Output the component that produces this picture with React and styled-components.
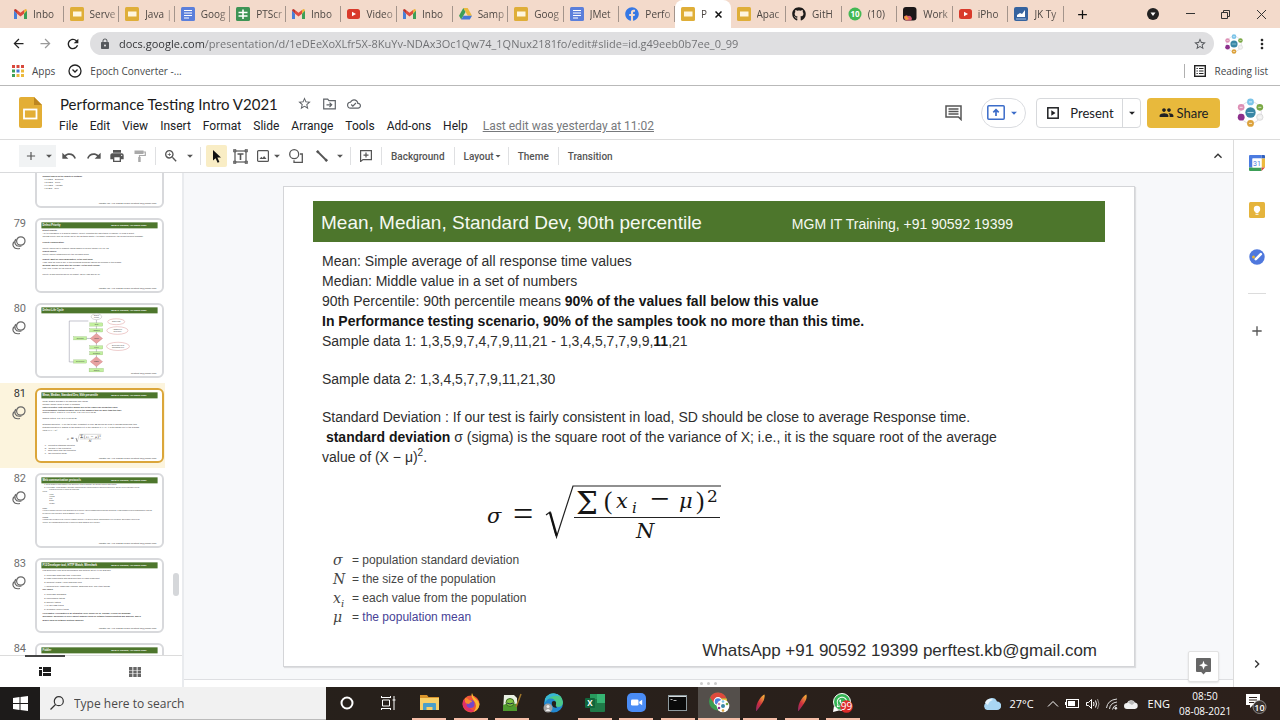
import React, { useLayoutEffect, useRef } from "react";
import styled, { createGlobalStyle, css } from "styled-components";
import {
  MdAdd,
  MdArrowBack,
  MdArrowDropDown,
  MdArrowForward,
  MdChevronRight,
  MdKeyboardArrowUp,
  MdLock,
  MdMoreVert,
  MdOutlineCloudDone,
  MdPeople,
  MdPrint,
  MdRedo,
  MdRefresh,
  MdStarBorder,
  MdUndo,
  MdZoomIn,
} from "react-icons/md";
import { FaFacebook, FaGithub, FaWhatsapp } from "react-icons/fa";

const GlobalStyle = createGlobalStyle`
  * {
    box-sizing: border-box;
  }
  body {
    margin: 0;
    background: white;
    font-family: Roboto, "Liberation Sans", sans-serif;
    color: #202124;
  }
  button {
    border: none;
    background: none;
    padding: 0;
    margin: 0;
    font: inherit;
    color: inherit;
    display: flex;
    align-items: center;
    justify-content: center;
  }
  a {
    color: inherit;
  }
  svg {
    display: block;
    flex: none;
  }
`;

const Page = styled.div`
  display: flex;
  flex-direction: column;
  height: 100vh;
  overflow: hidden;
`;

/* browser chrome */

const TabStrip = styled.div`
  display: flex;
  height: 28px;
  background: #f3dacb;
  padding-left: 8px;
`;

const TabList = styled.div`
  display: flex;
  flex: 1;
  min-width: 0;
`;

const Tab = styled.button`
  flex: 1 1 0;
  min-width: 0;
  justify-content: flex-start;
  gap: 6px;
  padding: 0 1px 0 6px;
  font: 10px "Open Sans", sans-serif;
  color: #4c4642;
  background-image: linear-gradient(#a3948b, #a3948b);
  background-size: 1px 16px;
  background-position: right 6px;
  background-repeat: no-repeat;
  ${(props) =>
    props.$active &&
    css`
      background: white;
      border-radius: 8px 8px 0 0;

      svg:last-child {
        margin-right: 8px;
      }
    `}
`;

const TabLabel = styled.span`
  flex: 1;
  min-width: 0;
  text-align: left;
  white-space: nowrap;
  mask-image: linear-gradient(to right, black 60%, rgba(0, 0, 0, 0.3));
`;

const WindowButtons = styled.div`
  display: flex;
  flex: none;
  align-items: center;
  justify-content: space-between;
  width: 216px;
  padding: 0 14px 0 11px;
`;

const NewTab = styled.button`
  margin-right: 30px;
`;

const AddressRow = styled.div`
  display: flex;
  align-items: center;
  height: 31px;
  padding: 0 11px;
  gap: 10px;
`;

const NavGroup = styled.div`
  display: flex;
  gap: 12px;
`;

const NavButton = styled.button`
  width: 15px;
  color: ${(props) => (props.$dim ? "#9a9a9a" : "#222")};
`;

const UrlBox = styled.label`
  display: flex;
  align-items: center;
  flex: 1;
  height: 23px;
  padding: 0 7px 0 9px;
  gap: 8px;
  border-radius: 12px;
  background: #dfdfe1;
  color: #55585c;
`;

const UrlInput = styled.input`
  flex: 1;
  border: none;
  outline: none;
  padding: 0;
  font: 11px "Open Sans", sans-serif;
  color: transparent;
  background: linear-gradient(to right, #2f3033 86px, #6d6e71 86px);
  background-clip: text;
`;

const Bookmarks = styled.nav`
  display: flex;
  align-items: center;
  height: 27px;
  padding: 0 12px 3px;
  gap: 13px;
  border-bottom: 1px solid #b9b9b9;
  font: 10px "Open Sans", sans-serif;
  color: #45474a;
`;

const Bookmark = styled.a`
  display: flex;
  align-items: center;
  gap: 8px;
  text-decoration: none;
`;

const ReadingList = styled.button`
  margin-left: auto;
  padding-left: 9px;
  gap: 8px;
  border-left: 1px solid #b0b0b0;
`;

/* document header */

const DocHeader = styled.header`
  display: flex;
  align-items: center;
  height: 54px;
  padding: 0 15px 0 19px;
  border-bottom: 1px solid #dcdcdc;
`;

const DocInfo = styled.div`
  flex: 1;
  margin-left: 17px;
  padding-top: 5px;
`;

const TitleRow = styled.div`
  display: flex;
  align-items: center;
  height: 22px;
  gap: 11px;
  color: #5f6368;
`;

const DocTitle = styled.h1`
  margin: 0 8px 0 1px;
  font: 15px Lato, sans-serif;
  color: #1b1b1b;
`;

const MenuRow = styled.nav`
  display: flex;
  align-items: center;
  height: 23px;
  gap: 12px;
  font-size: 12px;
`;

const LastEdit = styled.a`
  margin-left: 3px;
  color: #77797c;
`;

const HeaderActions = styled.div`
  display: flex;
  align-items: center;
`;

const PillButton = styled.button`
  width: 45px;
  height: 30px;
  margin: 0 10px 0 19px;
  gap: 2px;
  border: 1px solid #dadce0;
  border-radius: 15px;
  color: #3b6cc9;
`;

const Split = styled.div`
  display: flex;
  height: 30px;
  margin-right: 6px;
  border: 1px solid #d7d9dc;
  border-radius: 4px;
  font: 13px Lato, sans-serif;
`;

const PresentButton = styled.button`
  width: 86px;
  padding-left: 2px;
  gap: 11px;
  border-right: 1px solid #d7d9dc;
`;

const PresentMenu = styled.button`
  width: 17px;
`;

const ShareButton = styled.button`
  width: 73px;
  height: 30px;
  margin-right: 16px;
  gap: 3px;
  border-radius: 4px;
  background: #e8b93c;
  font: 13px Lato, sans-serif;
`;

/* workspace */

const Workspace = styled.div`
  display: flex;
  flex: 1;
  min-height: 0;
`;

const Editor = styled.div`
  display: flex;
  flex-direction: column;
  flex: 1;
`;

const Toolbar = styled.div`
  display: flex;
  align-items: center;
  height: 33px;
  padding: 0 3px 0 19px;
  border-bottom: 1px solid #d9dadc;
  color: #555;
`;

const Tool = styled.button`
  width: ${(props) => props.$w || 24}px;
  height: 22px;
  opacity: ${(props) => (props.$dim ? 0.5 : 1)};
`;

const NewSlide = styled.div`
  display: flex;
  background: #f1f3f4;
`;

const SelectTool = styled(Tool)`
  width: 21px;
  margin: 0 2px;
  border-radius: 2px;
  background: #f9edc5;
`;

const ArrowTool = styled(Tool)`
  width: 14px;
  margin-left: -${(props) => props.$overlap || 0}px;
`;

const TextTool = styled(Tool)`
  width: auto;
  padding: 0 6px;
  font-size: 10px;
  font-weight: 500;

  svg {
    margin: 0 -5px 0 -2px;
  }
`;

const Divider = styled.span`
  width: 1px;
  height: 18px;
  margin: 0 3px;
  background: #dfe0e2;
`;

const CollapseButton = styled(Tool)`
  margin-left: auto;
  color: #333;
`;

const Panes = styled.div`
  display: flex;
  flex: 1;
  min-height: 0;
`;

const Filmstrip = styled.aside`
  position: relative;
  display: flex;
  flex-direction: column;
  width: 184px;
  border-right: 2px solid #e9ebee;
`;

const ThumbList = styled.ol`
  flex: 1;
  min-height: 0;
  margin: 0;
  padding: 0;
  overflow: hidden;
  list-style: none;
`;

const ThumbItem = styled.li`
  display: flex;
  height: 85px;
  padding: 5px 0;
  background: ${(props) => (props.$active ? "#fcf4dd" : "white")};
  width: ${(props) => (props.$active ? "165px" : "auto")};
`;

const ThumbSide = styled.div`
  display: flex;
  flex-direction: column;
  align-items: flex-end;
  width: 26px;
  margin-right: 9px;
  gap: 6px;
  font-size: 11px;
  line-height: 12px;
  color: ${(props) => (props.$active ? "#333" : "#6e6e6e")};
`;

const Thumb = styled.button`
  width: 129px;
  height: 75px;
  border: 2px solid ${(props) => (props.$active ? "#dba63a" : "#d8d9dc")};
  border-radius: 6px;
  background: white;
  overflow: hidden;
`;

const ScrollHandle = styled.span`
  position: absolute;
  right: 3px;
  top: 400px;
  width: 6px;
  height: 23px;
  border-radius: 3px;
  background: #d5d7da;
`;

const ViewSwitch = styled.div`
  display: flex;
  align-items: stretch;
  height: 32px;
  padding-right: 2px;
  border-top: 1px solid #dcdcdc;
`;

const ViewButton = styled.button`
  flex: 1;
  color: #222;
`;

const ActiveView = styled(ViewButton)`
  margin-top: -1px;
  background: linear-gradient(#444, #444) center top / 40px 2px no-repeat;
`;

const CanvasPane = styled.main`
  position: relative;
  display: flex;
  flex-direction: column;
  flex: 1;
`;

const Canvas = styled.div`
  flex: 1;
  padding: 13px 98px 0 99px;
  background: #f7f8fa;
  border-bottom: 1px solid #dedfe2;
`;

const Notes = styled.div`
  display: flex;
  align-items: center;
  justify-content: center;
  gap: 4px;
  height: 7px;
`;

const Dot = styled.i`
  width: 3px;
  height: 3px;
  border-radius: 50%;
  background: #ccc;
`;

const ExploreButton = styled.button`
  position: absolute;
  right: 14px;
  bottom: 5px;
  width: 31px;
  height: 31px;
  border: 1px solid #e2e2e2;
  border-radius: 2px;
  background: white;
  box-shadow: 0 1px 2px rgba(0, 0, 0, 0.12);
`;

const SidePanel = styled.aside`
  display: flex;
  flex-direction: column;
  align-items: center;
  width: 47px;
  padding: 15px 0;
  border-left: 1px solid #dcdcdc;
`;

const SideButton = styled.button`
  height: 16px;
  margin-bottom: 31px;
`;

const SideRule = styled.span`
  width: 18px;
  height: 1px;
  margin: -3px 0 29px;
  background: #dcdcdc;
`;

const SideToggle = styled.button`
  margin-top: auto;
`;

/* slide */

const Slide = styled.article`
  display: flex;
  flex-direction: column;
  height: 481px;
  padding: 14px 29px 0;
  border: 1px solid #d4d5d8;
  background: white;
  box-shadow: 1px 1px 1px rgba(0, 0, 0, 0.1);
  font-family: "Liberation Sans", Arial, sans-serif;
  color: #2e2e2e;
`;

const SlideHead = styled.div`
  display: flex;
  align-items: center;
  justify-content: space-between;
  height: 41px;
  padding: 2px 92px 0 8px;
  background: #4d762c;
  color: #f6f9f2;
`;

const SlideTitle = styled.h2`
  margin: 0;
  font-size: 19px;
  font-weight: normal;
`;

const SlideContact = styled.span`
  padding-top: 3px;
  font-size: 14px;
`;

const SlideText = styled.div`
  padding: 9px 0 0 9px;
  font-size: 14px;
  line-height: 20px;
  white-space: nowrap;
`;

const Paragraph = styled.p`
  margin: 0 0 18px;

  b {
    color: #161616;
  }
  sup {
    font-size: 10px;
    line-height: 0;
  }
`;

const Formula = styled.svg`
  margin: -3px 0 0 170px;
`;

const Legend = styled.dl`
  display: grid;
  grid-template-columns: 19px auto;
  justify-content: start;
  margin: 7px 0 0 20px;
  font-size: 12px;
  line-height: 19px;
  color: #444;
`;

const Symbol = styled.dt`
  font: italic 14px "DejaVu Serif", serif;
  line-height: 19px;

  sub {
    font-size: 10px;
    line-height: 0;
  }
`;

const Meaning = styled.dd`
  margin: 0;

  a {
    color: #473f96;
    text-decoration: none;
  }
`;

const SlideFooter = styled.p`
  margin: auto 8px 5px;
  text-align: right;
  font-size: 17px;
  line-height: 20px;
`;

/* taskbar */

const Taskbar = styled.footer`
  display: flex;
  height: 33px;
  background: linear-gradient(to right, #25201b, #2c201b);
  color: white;
  font-family: "Open Sans", sans-serif;
`;

const StartButton = styled.button`
  width: 40px;
  background: #1d1b1a;
`;

const SearchBox = styled.label`
  display: flex;
  align-items: center;
  width: 286px;
  padding-left: 10px;
  gap: 10px;
  background: #f1f1f1;
  border-bottom: 1px solid #bbb;
`;

const SearchInput = styled.input`
  flex: 1;
  min-width: 0;
  border: none;
  outline: none;
  padding: 0;
  background: none;
  font: 12px "Open Sans", sans-serif;

  &::placeholder {
    color: #4a4a4a;
    opacity: 1;
  }
`;

const TaskIcons = styled.div`
  display: flex;
  width: 42%;
`;

const TaskButton = styled.button`
  flex: 1;
  border-bottom: 2px solid transparent;
  ${(props) =>
    props.$open &&
    css`
      background: linear-gradient(#f5bea8, #f5bea8) center bottom / 34px 2px no-repeat border-box;
    `}
  ${(props) =>
    props.$active &&
    css`
      background: #544f4b;
      border-color: #f5bea8;
    `}
`;

const Tray = styled.div`
  display: flex;
  align-items: center;
  margin-left: auto;
  font-size: 11px;
`;

const Weather = styled.button`
  gap: 8px;
  margin-right: 13px;
`;

const TrayIcons = styled.div`
  display: flex;
  align-items: center;
  gap: 6px;
  margin-right: 10px;
`;

const Clock = styled.time`
  width: 52px;
  margin: 0 15px 0 9px;
  font-size: 10px;
  line-height: 15px;
  text-align: center;
  white-space: nowrap;
`;

const Notice = styled.button`
  margin-right: 13px;
`;

const SlidesIcon = () => (
  <svg width="14" height="14" viewBox="0 0 14 14">
    <rect width="14" height="14" rx="1.5" fill="#dfae38" />
    <rect x="3" y="4.5" width="8.5" height="5" fill="#fff6df" />
  </svg>
);

const DocsIcon = () => (
  <svg width="14" height="14" viewBox="0 0 14 14">
    <rect width="14" height="14" rx="1.5" fill="#5b7fdb" />
    <path d="M3 3.5h8M3 6h8M3 8.5h8M3 11h5" stroke="white" strokeWidth="1.2" />
  </svg>
);

const SheetsIcon = () => (
  <svg width="14" height="14" viewBox="0 0 14 14">
    <rect width="14" height="14" rx="1.5" fill="#3d9455" />
    <path d="M2.5 5.5h9M7 2.5v9.5M2.5 9h9" stroke="white" strokeWidth="1.6" />
  </svg>
);

const GmailIcon = () => (
  <svg width="13" height="10" viewBox="0 0 13 10">
    <path d="M0 1.5v8.5h3V4.5z" fill="#4880d8" />
    <path d="M13 1.5v8.5h-3V4.5z" fill="#3c9f57" />
    <path d="M0 1.5l3 3V1L1.5 0Q0 0 0 1.5z" fill="#b9342c" />
    <path d="M13 1.5l-3 3V1l1.5-1Q13 0 13 1.5z" fill="#edb23a" />
    <path d="M3 1l3.5 2.7L10 1v3.7L6.5 7.5 3 4.7z" fill="#de4c3f" />
  </svg>
);

const YoutubeIcon = () => (
  <svg width="13" height="10" viewBox="0 0 13 10">
    <rect width="13" height="10" rx="2.5" fill="#d93a2b" />
    <path d="M5 2.8v4.4L9 5z" fill="white" />
  </svg>
);

const DriveIcon = () => (
  <svg width="13" height="12" viewBox="0 0 13 12">
    <path d="M4.3 0h4.4L13 7.7H8.8z" fill="#ecb93c" />
    <path d="M4.3 0L0 7.7 2.2 11.5 6.5 4z" fill="#3c9f57" />
    <path d="M4.5 7.7H13l-2.2 3.8H2.2z" fill="#4478d8" />
  </svg>
);

const WhatsappTabIcon = () => (
  <svg width="14" height="14" viewBox="0 0 14 14">
    <circle cx="7" cy="7" r="6.5" fill="#43b854" />
    <text x="7" y="10" fill="white" fontSize="8" fontWeight="700" textAnchor="middle">10</text>
  </svg>
);

const WorkIcon = () => (
  <svg width="14" height="14" viewBox="0 0 14 14">
    <rect width="13.5" height="13.5" rx="3" fill="#1b1718" />
    <path d="M1 10q2-3 4-1 3-1 4 3l-1 1.5H4q-3 0-3-3.5z" fill="#d85a6e" />
    <path d="M1 9.5l2.5-.5L6 12l-3 1z" fill="#f0a03a" />
  </svg>
);

const TypingIcon = () => (
  <svg width="14" height="14" viewBox="0 0 14 14">
    <rect width="14" height="14" rx="2" fill="#35639f" />
    <path d="M3 10V8l3-2 2 1 3-4v7z" fill="white" />
    <path d="M2 12h10" stroke="#9dbbe0" />
  </svg>
);

const TABS = [
  { label: "Inbo", icon: <GmailIcon /> },
  { label: "Serve", icon: <SlidesIcon /> },
  { label: "Java |", icon: <SlidesIcon /> },
  { label: "Goog", icon: <DocsIcon /> },
  { label: "PTScr", icon: <SheetsIcon /> },
  { label: "Inbo", icon: <GmailIcon /> },
  { label: "Video", icon: <YoutubeIcon /> },
  { label: "Inbo", icon: <GmailIcon /> },
  { label: "Samp", icon: <DriveIcon /> },
  { label: "Goog", icon: <SlidesIcon /> },
  { label: "JMet", icon: <DocsIcon /> },
  { label: "Perfo", icon: <FaFacebook size={14} color="#3578e5" /> },
  { label: "P", icon: <SlidesIcon />, active: true },
  { label: "Apac", icon: <SlidesIcon /> },
  { label: "GitH", icon: <FaGithub size={14} color="#1d1b1a" /> },
  { label: "(10)", icon: <WhatsappTabIcon /> },
  { label: "Work", icon: <WorkIcon /> },
  { label: "iPho", icon: <YoutubeIcon /> },
  { label: "JK Ty", icon: <TypingIcon /> },
];

const TabClose = () => (
  <svg width="7" height="7" viewBox="0 0 7 7">
    <path d="M.5 .5l6 6M6.5 .5l-6 6" stroke="#111" strokeWidth="1.5" />
  </svg>
);

const Avatar = ({ size }) => (
  <svg width={size} height={size} viewBox="0 0 28 28">
    <circle cx="14" cy="14" r="10.5" fill="none" stroke="#d9d3e0" strokeWidth="0.8" />
    <circle cx="14" cy="14" r="5" fill="#3987a6" />
    <path d="M11 14h6" stroke="#a8d3e2" />
    <circle cx="14" cy="3.8" r="3.3" fill="#7cc4e8" />
    <circle cx="23" cy="9" r="3.2" fill="#7aa845" />
    <circle cx="23" cy="18.5" r="3.1" fill="#eeeeee" stroke="#cfcfcf" strokeWidth="0.6" />
    <circle cx="14" cy="24.5" r="3.3" fill="#dca23c" />
    <circle cx="5" cy="18.5" r="3.3" fill="#8c2f8c" />
    <circle cx="5" cy="9" r="3.2" fill="#dd8fb5" />
    <path d="M3.5 9h3M12.5 3.8h3M21.5 9h3M21.5 18.5h3M12.5 24.5h3" stroke="white" strokeWidth="0.7" />
  </svg>
);

const AppsGrid = () => (
  <svg width="12" height="12" viewBox="0 0 12 12">
    {["#d8483c", "#d8483c", "#d8483c", "#3c9f57", "#4478d8", "#ecb93c", "#3c9f57", "#ecb93c", "#ecb93c"].map(
      (fill, i) => (
        <rect key={i} x={(i % 3) * 4.5} y={Math.floor(i / 3) * 4.5} width="3" height="3" fill={fill} />
      )
    )}
  </svg>
);

const EpochIcon = () => (
  <svg width="14" height="14" viewBox="0 0 14 14" fill="none" stroke="#222" strokeWidth="1.3">
    <circle cx="7" cy="7" r="6" />
    <path d="M4.5 5.5L7 8l2.5-2.5" />
  </svg>
);

const ReadingIcon = () => (
  <svg width="12" height="12" viewBox="0 0 12 12" fill="none" stroke="#222" strokeWidth="1.4">
    <rect x="0.7" y="0.7" width="10.6" height="10.6" />
    <path d="M2.5 3.5h1.3M5 3.5h4.5M2.5 6h1.3M5 6h4.5M2.5 8.5h1.3M5 8.5h4.5" strokeWidth="1.1" />
  </svg>
);

const SlidesLogo = () => (
  <svg width="23" height="31" viewBox="0 0 23 31">
    <path d="M2 0h13l8 8v21q0 2-2 2H2q-2 0-2-2V2q0-2 2-2z" fill="#e3ae35" />
    <path d="M15 0l8 8h-8z" fill="#bd8620" />
    <rect x="5" y="12.5" width="12.5" height="9" fill="none" stroke="white" strokeWidth="1.8" />
  </svg>
);

const FolderMoveIcon = () => (
  <svg width="13" height="12" viewBox="0 0 13 12" fill="none" stroke="#5f6368" strokeWidth="1.2">
    <path d="M0.7 10.8V1.2h4l1.2 1.5h6.4v8.1zM3.5 6.8h5M6.5 4.6l2.2 2.2-2.2 2.2" />
  </svg>
);

const CommentIcon = () => (
  <svg width="17" height="16" viewBox="0 0 17 16" fill="none" stroke="#555" strokeWidth="1.5">
    <path d="M1 1h15v13.5L13.5 12H1z" />
    <path d="M3.5 4h10M3.5 6.5h10M3.5 9h10" strokeWidth="1.4" />
  </svg>
);

const UploadBoxIcon = () => (
  <svg width="18" height="15" viewBox="0 0 18 15" fill="none" stroke="#3b6cc9" strokeWidth="1.5">
    <rect x="0.8" y="0.8" width="16.4" height="13.4" rx="1" />
    <path d="M9 11V5M6.3 7.3L9 4.6l2.7 2.7" strokeWidth="1.7" />
  </svg>
);

const PlayBoxIcon = () => (
  <svg width="12" height="12" viewBox="0 0 12 12">
    <rect x="0.8" y="0.8" width="10.4" height="10.4" fill="none" stroke="#202124" strokeWidth="1.5" />
    <path d="M4.3 3.3v5.4L8.5 6z" fill="#202124" />
  </svg>
);

const PaintIcon = () => (
  <svg width="12" height="12" viewBox="0 0 12 12">
    <rect x="0.5" y="0.5" width="9" height="3.5" fill="#555" />
    <path d="M9 2h2.3v3.5H5.5V7" fill="none" stroke="#555" strokeWidth="1.2" />
    <rect x="4.2" y="7" width="2.5" height="5" fill="#555" />
  </svg>
);

const CursorIcon = () => (
  <svg width="10" height="13" viewBox="0 0 10 13">
    <path d="M1 0v10.5l2.6-2.3 2 4.6 1.8-.8-2-4.5H9z" fill="#111" />
  </svg>
);

const TextBoxIcon = () => (
  <svg width="15" height="15" viewBox="0 0 15 15" fill="none" stroke="#555">
    <rect x="2" y="2" width="11" height="11" strokeWidth="1.2" />
    <path d="M4.5 5h6M7.5 5v6" strokeWidth="1.6" />
    <path d="M.5 .5h2.5v2.5H.5zM12 .5h2.5v2.5H12zM.5 12h2.5v2.5H.5zM12 12h2.5v2.5H12z" fill="#777" strokeWidth="0.6" />
  </svg>
);

const ImageIcon = () => (
  <svg width="12" height="12" viewBox="0 0 12 12">
    <rect x="0.6" y="0.6" width="10.8" height="10.8" rx="1" fill="none" stroke="#555" strokeWidth="1.2" />
    <path d="M2.5 9l1.8-2.3 1.3 1.4 1.5-2L9.5 9z" fill="#555" />
  </svg>
);

const ShapeIcon = () => (
  <svg width="14" height="14" viewBox="0 0 14 14" fill="none" stroke="#555" strokeWidth="1.3">
    <circle cx="5.2" cy="5.2" r="4.5" />
    <path d="M11 5h2.3v8.3H5V11.3" />
  </svg>
);

const LineIcon = () => (
  <svg width="12" height="12" viewBox="0 0 12 12" stroke="#555" fill="#555">
    <path d="M1.5 1.5l9 9" strokeWidth="1.8" />
    <circle cx="1.7" cy="1.7" r="1" />
    <circle cx="10.3" cy="10.3" r="1" />
  </svg>
);

const AddCommentIcon = () => (
  <svg width="12" height="12" viewBox="0 0 12 12" fill="none" stroke="#555" strokeWidth="1.2">
    <path d="M.6 .6h10.8v9H3L.6 11.5zM6 2.6v5M3.5 5.1h5" />
  </svg>
);

const TransitionIcon = () => (
  <svg width="14" height="14" viewBox="0 0 14 14" fill="none" stroke="#666" strokeWidth="1.2">
    <circle cx="8.8" cy="5" r="4.2" />
    <path d="M4.1 3.3Q2 5 3.3 8t6.2 2" />
    <path d="M2.5 5.5Q0 7.5 1.5 10.5t6.5 2" />
  </svg>
);

const FilmViewIcon = () => (
  <svg width="12" height="9" viewBox="0 0 12 9" fill="#1c1c1c">
    <path d="M0 0h3v2H0zM0 3h3v6H0zM4 0h8v5H4zM4 6h8v3H4z" />
  </svg>
);

const GridViewIcon = () => (
  <svg width="12" height="10" viewBox="0 0 12 10" fill="#666">
    <path d="M0 0h3.4v3H0zM4.3 0h3.4v3H4.3zM8.6 0H12v3H8.6zM0 3.5h3.4v3H0zM4.3 3.5h3.4v3H4.3zM8.6 3.5H12v3H8.6zM0 7h3.4v3H0zM4.3 7h3.4v3H4.3zM8.6 7H12v3H8.6z" />
  </svg>
);

const ExploreIcon = () => (
  <svg width="15" height="17" viewBox="0 0 15 17">
    <path d="M1 0h13q1 0 1 1v12q0 1-1 1H9.8L7.5 16.5 5.2 14H1q-1 0-1-1V1q0-1 1-1z" fill="#666" />
    <path d="M7.5 2.8l1.2 3.3L12 7.3 8.7 8.5 7.5 11.8 6.3 8.5 3 7.3l3.3-1.2z" fill="white" />
  </svg>
);

const CalendarIcon = () => (
  <svg width="16" height="16" viewBox="0 0 16 16">
    <path d="M0 1q0-1 1-1h11.5v3.5h-9v9H0z" fill="#4b7be0" />
    <path d="M12.5 0H15q1 0 1 1v2.5h-3.5z" fill="#3060c0" />
    <path d="M12.5 3.5H16v9h-3.5z" fill="#edb93c" />
    <path d="M0 12.5h12.5V16H1q-1 0-1-1z" fill="#3c9f57" />
    <path d="M12.5 12.5H16L12.5 16z" fill="#d8483c" />
    <rect x="3.5" y="3.5" width="9" height="9" fill="white" />
    <text x="8" y="10.5" fill="#4b7be0" fontSize="7" textAnchor="middle">31</text>
  </svg>
);

const KeepIcon = () => (
  <svg width="16" height="16" viewBox="0 0 16 16">
    <rect width="16" height="16" rx="1.5" fill="#e5b43c" />
    <circle cx="8" cy="7" r="3.2" fill="white" />
    <path d="M6.5 9h3v2h-3zM6.5 11.8h3v1h-3z" fill="white" />
  </svg>
);

const TasksIcon = () => (
  <svg width="16" height="16" viewBox="0 0 16 16">
    <circle cx="8" cy="8" r="7.7" fill="#4f78dd" />
    <circle cx="4.5" cy="8" r="1.5" fill="#e5b43c" />
    <path d="M6.8 10.2l5-5" stroke="white" strokeWidth="2.6" strokeLinecap="round" />
  </svg>
);

const CONTACT = "MGM IT Training, +91 90592 19399";
const FOOTER = "WhatsApp +91 90592 19399 perftest.kb@gmail.com";

/* each line is [x, y, text, bold] on an 852 x 480 slide */
const SLIDES = [
  {
    id: 78,
    title: "Support",
    lines: [
      [38, 284, "Support based on the quality of software", true],
      [50, 304, "•     1-2 Bug = Excellent"],
      [50, 323, "•     3-5 Bug = Good"],
      [50, 344, "•     6-9 Bug = Average"],
      [50, 363, "•     10 Bug = Poor"],
    ],
  },
  {
    id: 79,
    title: "Defect Priority",
    lines: [
      [38, 74, "Defect Priority:", true],
      [38, 95, "As it is a measure of a defect's urgency, Priority indicates the importance or urgency of fixing a defect"],
      [38, 115, "Though priority may be initially set by the Software Tester, it is usually finalized by the Project/Product Manager."],
      [38, 156, "Priority Classification:", true],
      [38, 193, "Priority can be set to different values based on project needs, e.g. P1, P2"],
      [38, 213, "Urgent values:", true],
      [38, 236, "Priority can be categorized into the following levels:"],
      [38, 272, "Urgent: Must be fixed immediately, in the next build.", true],
      [38, 290, "High: Must be fixed in any of the upcoming builds but should be included in the release."],
      [38, 311, "Medium: May be fixed after the release / in the next release.", true],
      [38, 331, "Low: May or may not be fixed at all."],
      [38, 370, "Priority is also denoted as P1 for Urgent, P2 for High and so on."],
    ],
  },
  { id: 80, title: "Defect Life Cycle", lines: [], flow: true },
  {
    id: 81,
    title: "Mean, Median, Standard Dev, 90th percentile",
    lines: [
      [38, 80, "Mean: Simple average of all response time values"],
      [38, 100, "Median: Middle value in a set of numbers"],
      [38, 119, "90th Percentile: 90th percentile means 90% of the values fall below this value", true],
      [38, 139, "In Performance testing scenario, 90% of the samples took no more than this time.", true],
      [38, 158, "Sample data 1: 1,3,5,9,7,4,7,9,11,21 - 1,3,4,5,7,7,9,9,11,21"],
      [38, 197, "Sample data 2: 1,3,4,5,7,7,9,11,21,30"],
      [38, 236, "Standard Deviation : If our test is fairly consistent in load, SD should be close to average Response time."],
      [38, 256, "standard deviation σ (sigma) is the square root of the variance of X; i.e., it is the square root of the average"],
      [38, 275, "value of (X − μ)²."],
      [52, 378, "σ  = population standard deviation"],
      [52, 397, "N = the size of the population"],
      [52, 416, "x = each value from the population"],
      [52, 435, "μ  = the population mean"],
    ],
    formula: true,
  },
  {
    id: 82,
    title: "Web communication protocols",
    size: 11,
    lines: [
      [50, 68, "1.    Client sends a HTTP request to the web server, gets a response; the protocol defines each request"],
      [50, 84, "2.    It is reusable, a web browser, and many connections are opened between each client and server, and the server responds to all the"],
      [84, 100, "resources needed to render the web page"],
      [38, 114, "Types:"],
      [84, 132, "HTTP"],
      [84, 148, "HTTPS"],
      [84, 164, "FTP"],
      [84, 178, "SMTP"],
      [84, 196, "WebSo"],
      [38, 228, "HTTP:", true],
      [38, 244, "Hypertext Transfer Protocol is an application layer protocol, used in transmitting hypermedia documents. It was designed for web communication, and can"],
      [38, 262, "be used for other purposes, such as RESTful APIs / HTTP"],
      [38, 292, "HTTPS:", true],
      [38, 308, "HTTPS is an extension of the Hypertext Transfer Protocol. It is used for secure communication over a network, and is widely used on the"],
      [38, 326, "Internet; the communication protocol is encrypted using Transport Layer Security"],
    ],
  },
  {
    id: 83,
    title: "F12 Developer tool, HTTP Watch, Wireshark",
    lines: [
      [38, 74, "F12 Developer tools allow performance and network activity to be analysed"],
      [50, 104, "1.     Web page Response time, Load Time"],
      [50, 126, "2.     Page components with sizes and time for each component"],
      [50, 154, "3.     Request Header, HTTP response code"],
      [50, 180, "4.     Request body, Response Headers, Response body, and other timings"],
      [38, 202, "Use cases:", true],
      [50, 240, "1.     Web page debugging"],
      [50, 263, "2.     Performance testing"],
      [50, 289, "3.     Security testing"],
      [50, 315, "4.     UI and CSS tuning"],
      [50, 340, "5.     Compare HTTP/1 timing"],
      [38, 366, "HTTPWatch: HTTPWatch is an integrated HTTP sniffer for IE, Chrome, Firefox for Windows", true],
      [38, 389, "Wireshark: Wireshark is a free packet analyzer used for network troubleshooting and analysis, and is", true],
      [38, 416, "widely used for network protocol analysis.", true],
    ],
  },
  { id: 84, title: "Fiddler", lines: [] },
];

const FlowChart = () => (
  <g fontSize="12" textAnchor="middle">
    <path d="M405 96V430M350 107H220V386H260M270 226H370" fill="none" stroke="#9a9aaa" strokeWidth="4" />
    <g fill="white" stroke="#d98c8c" strokeWidth="3">
      <ellipse cx="405" cy="78" rx="36" ry="20" stroke="#aaa" />
      <ellipse cx="540" cy="112" rx="58" ry="20" />
      <ellipse cx="548" cy="172" rx="72" ry="26" />
      <ellipse cx="552" cy="280" rx="78" ry="28" />
    </g>
    <g fill="#c3f0a0" stroke="#8ab36a" strokeWidth="2">
      <rect x="360" y="120" width="88" height="22" />
      <rect x="360" y="160" width="88" height="22" />
      <rect x="250" y="214" width="88" height="22" />
      <rect x="360" y="276" width="88" height="22" />
      <rect x="360" y="316" width="88" height="22" />
      <rect x="250" y="372" width="88" height="22" />
      <rect x="355" y="430" width="98" height="24" />
    </g>
    <path d="M405 192l42 34-42 34-42-34zM405 350l42 34-42 34-42-34z" fill="#e8a2a2" stroke="#b66" strokeWidth="2" />
    <g fill="#333">
      <text x="405" y="76">Defect</text>
      <text x="405" y="90">Found</text>
      <text x="405" y="135">New</text>
      <text x="405" y="175">Assigned</text>
      <text x="405" y="230">Valid?</text>
      <text x="294" y="229">Rejected</text>
      <text x="405" y="291">Fixed</text>
      <text x="405" y="331">Retested</text>
      <text x="405" y="388">Pass?</text>
      <text x="294" y="387">Reopened</text>
      <text x="405" y="446">Closed</text>
      <text x="540" y="116">Tester logs</text>
      <text x="548" y="170">Assigned to</text>
      <text x="548" y="184">developer</text>
      <text x="552" y="276">Developer fixes</text>
      <text x="552" y="290">and hands over</text>
    </g>
  </g>
);

const FormulaMarks = () => (
  <g>
    <path d="M63 33l4-3 6.5 25L90 4h148M91 35.5h146" fill="none" stroke="#222" strokeWidth="1.2" />
    <path d="M67 30.5l6.5 23" fill="none" stroke="#111" strokeWidth="2.4" />
    <g fill="#161616" fontFamily="DejaVu Serif, serif" fontStyle="italic" fontSize="21">
      <text x="4" y="41">σ</text>
      <text x="30" y="44" fontStyle="normal" fontFamily="Liberation Serif" fontSize="36">=</text>
      <text x="93" y="32" fontStyle="normal" fontSize="31">Σ</text>
      <text x="121" y="27" fontStyle="normal" fontFamily="Liberation Serif" fontSize="25">(</text>
      <text x="133" y="26">x</text>
      <text x="149" y="31" fontSize="15">i</text>
      <text x="167" y="28" fontStyle="normal" fontFamily="Liberation Serif" fontSize="34">−</text>
      <text x="196" y="26">μ</text>
      <text x="213" y="27" fontStyle="normal" fontFamily="Liberation Serif" fontSize="25">)</text>
      <text x="224" y="20" fontStyle="normal" fontSize="17">2</text>
      <text x="153" y="56">N</text>
    </g>
  </g>
);

const ThumbArt = ({ slide }) => (
  <svg width="125" height="71" viewBox="0 0 852 480" fontFamily="Liberation Sans" fill="#333">
    <rect x="30" y="14" width="792" height="41" fill="#4d762c" />
    <g fill="white" fontWeight="700">
      <text x="38" y="42" fontSize="18">{slide.title}</text>
      <text x="506" y="42" fontSize="15">{CONTACT}</text>
    </g>
    <g fontSize={slide.size || 14}>
      {slide.lines.map(([x, y, text, bold]) => (
        <text key={y} x={x} y={y} fontWeight={bold ? 700 : 400}>{text}</text>
      ))}
    </g>
    {slide.flow && <FlowChart />}
    {slide.formula && (
      <g transform="translate(200 296)">
        <FormulaMarks />
      </g>
    )}
    <text x="814" y="468" fontSize="17" textAnchor="end">{slide.flow ? "perftest.kb@gmail.com" : FOOTER}</text>
  </svg>
);

const CURRENT = 81;

function SlideList() {
  const listRef = useRef(null);

  useLayoutEffect(() => {
    listRef.current.scrollTop = 45;
  }, []);

  return (
    <Filmstrip>
      <ThumbList ref={listRef}>
        {SLIDES.map((slide) => (
          <ThumbItem key={slide.id} $active={slide.id === CURRENT}>
            <ThumbSide $active={slide.id === CURRENT}>
              <span>{slide.id}</span>
              <TransitionIcon />
            </ThumbSide>
            <Thumb $active={slide.id === CURRENT} aria-label={slide.title}>
              <ThumbArt slide={slide} />
            </Thumb>
          </ThumbItem>
        ))}
      </ThumbList>
      <ScrollHandle />
      <ViewSwitch>
        <ActiveView aria-label="Filmstrip view"><FilmViewIcon /></ActiveView>
        <ViewButton aria-label="Grid view"><GridViewIcon /></ViewButton>
      </ViewSwitch>
    </Filmstrip>
  );
}

function BrowserBar() {
  return (
    <>
      <TabStrip>
        <TabList>
          {TABS.map((tab, i) => (
            <Tab key={i} $active={tab.active}>
              {tab.icon}
              <TabLabel>{tab.label}</TabLabel>
              {tab.active && <TabClose />}
            </Tab>
          ))}
        </TabList>
        <WindowButtons>
          <NewTab aria-label="New tab"><MdAdd size={15} color="#111" /></NewTab>
          <button aria-label="Search tabs">
            <svg width="12" height="12" viewBox="0 0 12 12">
              <circle cx="6" cy="6" r="6" fill="#222" />
              <path d="M3.5 4.5h5L6 8z" fill="white" />
            </svg>
          </button>
          <button aria-label="Minimize">
            <svg width="9" height="10" viewBox="0 0 9 10"><path d="M0 4.5h9" stroke="#333" /></svg>
          </button>
          <button aria-label="Restore">
            <svg width="9" height="9" viewBox="0 0 9 9" fill="none" stroke="#333">
              <path d="M.5 2.5h6v6h-6zM2.5 2.5v-2h6v6h-2" />
            </svg>
          </button>
          <button aria-label="Close">
            <svg width="9" height="9" viewBox="0 0 9 9"><path d="M0 0l9 9M9 0L0 9" stroke="#333" /></svg>
          </button>
        </WindowButtons>
      </TabStrip>
      <AddressRow>
        <NavGroup>
          <NavButton aria-label="Back"><MdArrowBack size={15} /></NavButton>
          <NavButton aria-label="Forward" $dim><MdArrowForward size={15} /></NavButton>
          <NavButton aria-label="Reload"><MdRefresh size={16} /></NavButton>
        </NavGroup>
        <UrlBox>
          <MdLock size={12} />
          <UrlInput
            aria-label="Address"
            defaultValue="docs.google.com/presentation/d/1eDEeXoXLfr5X-8KuYv-NDAx3Oc1Qw74_1QNux2181fo/edit#slide=id.g49eeb0b7ee_0_99"
          />
          <MdStarBorder size={14} />
        </UrlBox>
        <Avatar size={20} />
        <NavButton aria-label="Browser menu"><MdMoreVert size={16} /></NavButton>
      </AddressRow>
      <Bookmarks>
        <Bookmark href="#apps"><AppsGrid />Apps</Bookmark>
        <Bookmark href="#epoch"><EpochIcon />Epoch Converter -...</Bookmark>
        <ReadingList><ReadingIcon />Reading list</ReadingList>
      </Bookmarks>
    </>
  );
}

const MENUS = ["File", "Edit", "View", "Insert", "Format", "Slide", "Arrange", "Tools", "Add-ons", "Help"];

function DocumentHeader() {
  return (
    <DocHeader>
      <SlidesLogo />
      <DocInfo>
        <TitleRow>
          <DocTitle>Performance Testing Intro V2021</DocTitle>
          <MdStarBorder size={15} />
          <FolderMoveIcon />
          <MdOutlineCloudDone size={14} />
        </TitleRow>
        <MenuRow>
          {MENUS.map((menu) => (
            <button key={menu}>{menu}</button>
          ))}
          <LastEdit href="#history">Last edit was yesterday at 11:02</LastEdit>
        </MenuRow>
      </DocInfo>
      <HeaderActions>
        <button aria-label="Comments"><CommentIcon /></button>
        <PillButton aria-label="Present to a meeting">
          <UploadBoxIcon />
          <MdArrowDropDown size={14} />
        </PillButton>
        <Split>
          <PresentButton><PlayBoxIcon />Present</PresentButton>
          <PresentMenu aria-label="Present options"><MdArrowDropDown size={14} /></PresentMenu>
        </Split>
        <ShareButton><MdPeople size={15} />Share</ShareButton>
        <Avatar size={29} />
      </HeaderActions>
    </DocHeader>
  );
}

function EditorToolbar() {
  return (
    <Toolbar>
      <NewSlide>
        <Tool $w={23} aria-label="New slide"><MdAdd size={14} /></Tool>
        <ArrowTool aria-label="New slide with layout"><MdArrowDropDown size={14} /></ArrowTool>
      </NewSlide>
      <Tool $w={26} aria-label="Undo"><MdUndo size={16} /></Tool>
      <Tool $w={23} aria-label="Redo"><MdRedo size={16} /></Tool>
      <Tool $w={23} aria-label="Print"><MdPrint size={16} /></Tool>
      <Tool $dim aria-label="Paint format"><PaintIcon /></Tool>
      <Divider />
      <Tool aria-label="Zoom"><MdZoomIn size={16} /></Tool>
      <ArrowTool aria-label="Zoom options"><MdArrowDropDown size={14} /></ArrowTool>
      <Divider />
      <SelectTool aria-label="Select"><CursorIcon /></SelectTool>
      <Tool $w={22} aria-label="Text box"><TextBoxIcon /></Tool>
      <Tool aria-label="Insert image"><ImageIcon /></Tool>
      <ArrowTool $overlap={5} aria-label="Image options"><MdArrowDropDown size={14} /></ArrowTool>
      <Tool aria-label="Shape"><ShapeIcon /></Tool>
      <Tool $w={28} aria-label="Line"><LineIcon /></Tool>
      <ArrowTool $overlap={3} aria-label="Line options"><MdArrowDropDown size={14} /></ArrowTool>
      <Divider />
      <Tool aria-label="Add comment"><AddCommentIcon /></Tool>
      <Divider />
      <TextTool>Background</TextTool>
      <Divider />
      <TextTool>Layout<MdArrowDropDown size={12} /></TextTool>
      <Divider />
      <TextTool>Theme</TextTool>
      <Divider />
      <TextTool>Transition</TextTool>
      <CollapseButton aria-label="Hide the menus"><MdKeyboardArrowUp size={16} /></CollapseButton>
    </Toolbar>
  );
}

function SlideCanvas() {
  return (
    <CanvasPane>
      <Canvas>
        <Slide>
          <SlideHead>
            <SlideTitle>Mean, Median, Standard Dev, 90th percentile</SlideTitle>
            <SlideContact>{CONTACT}</SlideContact>
          </SlideHead>
          <SlideText>
            <Paragraph>
              Mean: Simple average of all response time values<br />
              Median: Middle value in a set of numbers<br />
              90th Percentile: 90th percentile means <b>90% of the values fall below this value</b><br />
              <b>In Performance testing scenario, 90% of the samples took no more than this time.</b><br />
              Sample data 1: 1,3,5,9,7,4,7,9,11,21 - 1,3,4,5,7,7,9,9,<b>11</b>,21
            </Paragraph>
            <Paragraph>Sample data 2: 1,3,4,5,7,7,9,11,21,30</Paragraph>
            <Paragraph>
              Standard Deviation : If our test is fairly consistent in load, SD should be close to average Response time.
              <br />
              &nbsp;<b>standard deviation</b> σ (sigma) is the square root of the variance of X; i.e., it is the square
              root of the average
              <br />
              value of (X − μ)<sup>2</sup>.
            </Paragraph>
          </SlideText>
          <Formula width="240" height="62" viewBox="0 0 240 62" role="img" aria-label="Standard deviation formula">
            <FormulaMarks />
          </Formula>
          <Legend>
            <Symbol>σ</Symbol>
            <Meaning>= population standard deviation</Meaning>
            <Symbol>N</Symbol>
            <Meaning>= the size of the population</Meaning>
            <Symbol>x<sub>i</sub></Symbol>
            <Meaning>= each value from the population</Meaning>
            <Symbol>μ</Symbol>
            <Meaning>= <a href="#mean">the population mean</a></Meaning>
          </Legend>
          <SlideFooter>{FOOTER}</SlideFooter>
        </Slide>
      </Canvas>
      <Notes><Dot /><Dot /><Dot /></Notes>
      <ExploreButton aria-label="Explore"><ExploreIcon /></ExploreButton>
    </CanvasPane>
  );
}

const Feather = () => (
  <svg width="18" height="18" viewBox="0 0 18 18">
    <defs>
      <linearGradient id="feather" x1="0" y1="1" x2="0.6" y2="0">
        <stop offset="0" stopColor="#8c2a6b" />
        <stop offset="0.5" stopColor="#cf2e3d" />
        <stop offset="1" stopColor="#f0a03a" />
      </linearGradient>
    </defs>
    <path d="M5 17Q5 10 8 6q3-5 5.5-5.5Q14.5 4 11 9.5 8 14 5.5 17z" fill="url(#feather)" />
  </svg>
);

const TASKS = [
  {
    label: "Cortana",
    icon: <svg width="14" height="14" viewBox="0 0 14 14"><circle cx="7" cy="7" r="5.5" fill="none" stroke="white" strokeWidth="2" /></svg>,
  },
  {
    label: "Task View",
    icon: (
      <svg width="15" height="14" viewBox="0 0 15 14" fill="none" stroke="white">
        <path d="M1.5 4h7v6h-7zM.5 1.5h9M.5 12.5h9M.5 0v2M9.5 0v2M.5 12v2M9.5 12v2M13 0v14M11.5 4h3" />
      </svg>
    ),
  },
  {
    label: "File Explorer",
    open: true,
    icon: (
      <svg width="19" height="17" viewBox="0 0 19 17">
        <path d="M0 1h7l1.5 2H19v12H0z" fill="#d9942b" />
        <rect y="4" width="19" height="12" fill="#f7d06a" />
        <path d="M3 16V10q0-1 1-1h11q1 0 1 1v6h-3.5v-3h-6v3z" fill="#4a9fca" />
      </svg>
    ),
  },
  {
    label: "Firefox",
    open: true,
    icon: (
      <svg width="20" height="20" viewBox="0 0 20 20">
        <circle cx="10" cy="11" r="8.5" fill="#f0553a" />
        <path d="M3 6q-3 6 1 10t10 2Q6 16 3 6z" fill="#e22f68" />
        <path d="M11 0q1 4 4 6t3.5 5q-.5 6-6 8 5-6 0-12-3-4-1.5-7z" fill="#fbb832" />
        <circle cx="9.5" cy="11" r="4" fill="#7648c9" />
        <path d="M4 5q3 0 4 2 3 0 3 2-2 0-3 2-3 0-4-2z" fill="#fa8a2e" />
      </svg>
    ),
  },
  {
    label: "Notepad++",
    open: true,
    icon: (
      <svg width="20" height="20" viewBox="0 0 20 20">
        <path d="M2 2h10l3 3v13H1z" fill="#e9efe3" />
        <path d="M1 12q6-3 14-1v7H1z" fill="#4f9a2e" />
        <circle cx="8" cy="9.5" r="4" fill="#80c342" stroke="#3a6b22" />
        <path d="M5 10q3 2 6 0" stroke="#234" fill="none" />
        <path d="M19 1l-5 13" stroke="#a0762c" strokeWidth="1.5" />
      </svg>
    ),
  },
  {
    label: "Edge",
    icon: (
      <svg width="21" height="20" viewBox="0 0 21 20">
        <circle cx="10.5" cy="10" r="9.5" fill="#2187cf" />
        <path d="M2 6Q5 0 11 .5q8 .5 9 8.5 0 5-5 5-4-1-2-4-1-5-6-4.5Q4 5.5 2 9z" fill="#4cc98a" />
        <path d="M2 6Q5 0 11 .5q4 0 6 3-8-3-15 5.5z" fill="#38b6d6" />
        <path d="M9 12q-1-4 2-4 2.5 0 2 3-1 2 1 3.5Q10 15.5 9 12z" fill="#25201b" />
        <circle cx="5" cy="15" r="4.5" fill="#a2a2a2" />
        <circle cx="5" cy="13.5" r="1.5" fill="#eee" />
        <path d="M2.5 18q2.5-4 5 0z" fill="#eee" />
      </svg>
    ),
  },
  {
    label: "Excel",
    open: true,
    icon: (
      <svg width="20" height="18" viewBox="0 0 20 18">
        <rect x="5" width="15" height="18" rx="1" fill="#1f7a48" />
        <rect x="12" width="8" height="9" fill="#36b573" />
        <rect x="5" width="7" height="5" fill="#279a5d" />
        <rect y="4" width="10" height="10" rx="1" fill="#11653b" />
        <text x="5" y="12" fill="white" fontSize="8" fontWeight="700" textAnchor="middle">X</text>
      </svg>
    ),
  },
  {
    label: "Zoom",
    open: true,
    icon: (
      <svg width="19" height="19" viewBox="0 0 19 19">
        <rect width="19" height="19" rx="5" fill="#4a8cf5" />
        <rect x="4" y="6.5" width="7.5" height="6" rx="1.3" fill="white" />
        <path d="M12.2 8.8l3-2v5.5l-3-2z" fill="white" />
      </svg>
    ),
  },
  {
    label: "Command Prompt",
    open: true,
    icon: (
      <svg width="19" height="16" viewBox="0 0 19 16">
        <rect x="0.5" y="0.5" width="18" height="15" fill="#0a0a0a" stroke="#8e9a9e" />
        <path d="M1 1.5h17" stroke="#d5dadc" />
        <path d="M2.5 4.5h2M5.5 5.5h3" stroke="#ddd" strokeWidth="0.8" />
      </svg>
    ),
  },
  {
    label: "Chrome",
    active: true,
    icon: (
      <svg width="22" height="21" viewBox="0 0 22 21">
        <circle cx="10" cy="9.5" r="9" fill="#3b9c51" />
        <path d="M2 5.5a9 9 0 0 1 16.5 1H10L6.5 12z" fill="#dd4a3d" />
        <path d="M18.6 6.5A9 9 0 0 1 10 18.5l4-7-1-5z" fill="#f0c13f" />
        <circle cx="10" cy="9.5" r="3.8" fill="#4a82dc" stroke="white" strokeWidth="1.2" />
        <circle cx="15" cy="14" r="6.3" fill="white" />
        <circle cx="15" cy="14" r="2" fill="#3987a6" />
        <circle cx="15" cy="9.5" r="1.3" fill="#7cc4e8" />
        <circle cx="19" cy="12" r="1.3" fill="#7aa845" />
        <circle cx="15" cy="18.5" r="1.3" fill="#dca23c" />
        <circle cx="11" cy="16" r="1.3" fill="#8c2f8c" />
        <circle cx="11" cy="12" r="1.3" fill="#dd8fb5" />
      </svg>
    ),
  },
  { label: "JMeter", open: true, icon: <Feather /> },
  { label: "JMeter 2", open: true, icon: <Feather /> },
  {
    label: "WhatsApp",
    open: true,
    icon: (
      <svg width="22" height="20" viewBox="0 0 22 20">
        <circle cx="10" cy="9" r="8.5" fill="#35b455" stroke="white" />
        <path d="M2 13l-1 6 6-1.5z" fill="white" />
        <FaWhatsapp x="4" y="3" size={12} color="white" />
        <circle cx="14.5" cy="13.5" r="6.3" fill="#de2b2b" />
        <text x="14.5" y="17" fill="white" fontSize="10" textAnchor="middle">99</text>
      </svg>
    ),
  },
];

function WindowsTaskbar() {
  return (
    <Taskbar>
      <StartButton aria-label="Start">
        <svg width="15" height="15" viewBox="0 0 15 15" fill="white">
          <path d="M0 2l6.5-1v6H0zM7.5 .9L15 0v7H7.5zM0 8h6.5v6L0 13zM7.5 8H15v7l-7.5-1z" />
        </svg>
      </StartButton>
      <SearchBox>
        <svg width="14" height="14" viewBox="0 0 14 14" fill="none" stroke="#333" strokeWidth="1.2">
          <circle cx="8.8" cy="5.2" r="4.5" />
          <path d="M5.5 8.5L.5 13.5" />
        </svg>
        <SearchInput aria-label="Search" placeholder="Type here to search" />
      </SearchBox>
      <TaskIcons>
        {TASKS.map((task) => (
          <TaskButton key={task.label} aria-label={task.label} $open={task.open} $active={task.active}>
            {task.icon}
          </TaskButton>
        ))}
      </TaskIcons>
      <Tray>
        <Weather>
          <svg width="18" height="13" viewBox="0 0 18 13">
            <path d="M4 13a4 4 0 0 1-.5-7.5A5.5 5.5 0 0 1 14 4.5 4.2 4.2 0 0 1 14 13z" fill="#a9d6f3" />
            <path d="M2 6a5 5 0 0 1 8-3Q6 4 5 8z" fill="#e6f4fd" />
          </svg>
          27°C
        </Weather>
        <TrayIcons>
          <svg width="12" height="8" viewBox="0 0 12 8"><path d="M1 6.5l5-5 5 5" fill="none" stroke="white" /></svg>
          <svg width="15" height="9" viewBox="0 0 15 9">
            <rect x="1.5" y="0.5" width="12" height="8" fill="none" stroke="white" />
            <path d="M3 2h7v5H3zM0 3h1v3H0z" fill="white" />
          </svg>
          <svg width="14" height="12" viewBox="0 0 14 12" fill="none" stroke="white">
            <path d="M.5 4.5h2l3-3v9l-3-3h-2zM7.5 4q1 2 0 4M9.5 2.5q2 3.5 0 7" />
            <path d="M11.5 1q3 5 0 10" opacity="0.5" />
          </svg>
          <svg width="12" height="12" viewBox="0 0 12 12" fill="none" stroke="#ddd">
            <path d="M.5 10Q1.5 2 11 1M3.5 11Q4 5 11 4M6.5 11.5Q7 8 11 7" />
            <circle cx="9.8" cy="10.2" r="1" fill="white" />
          </svg>
          <svg width="14" height="10" viewBox="0 0 14 10">
            <path d="M3 10a3 3 0 0 1 0-6 4.5 4.5 0 0 1 8-.5A3.3 3.3 0 0 1 11 10z" fill="#f1f1f1" />
            <path d="M4 3.5a4.5 4.5 0 0 1 7 0L8 6z" fill="#bbb" />
          </svg>
        </TrayIcons>
        <span>ENG</span>
        <Clock>
          08:50<br />08-08-2021
        </Clock>
        <Notice aria-label="Notifications">
          <svg width="21" height="21" viewBox="0 0 21 21">
            <path d="M0 1h14v11H7l-3 3v-3H0z" fill="white" />
            <path d="M3 4.5h8M3 7h8M3 9.5h5" stroke="#2c201b" />
            <circle cx="13.5" cy="14" r="6.5" fill="#3b3330" stroke="#aaa" strokeWidth="0.7" />
            <text x="13.5" y="17.5" fill="white" fontSize="9" fontWeight="600" textAnchor="middle">10</text>
          </svg>
        </Notice>
      </Tray>
    </Taskbar>
  );
}

function App() {
  return (
    <>
      <GlobalStyle />
      <Page>
        <BrowserBar />
        <DocumentHeader />
        <Workspace>
          <Editor>
            <EditorToolbar />
            <Panes>
              <SlideList />
              <SlideCanvas />
            </Panes>
          </Editor>
          <SidePanel>
            <SideButton aria-label="Calendar"><CalendarIcon /></SideButton>
            <SideButton aria-label="Keep"><KeepIcon /></SideButton>
            <SideButton aria-label="Tasks"><TasksIcon /></SideButton>
            <SideRule />
            <SideButton aria-label="Get add-ons"><MdAdd size={16} color="#555" /></SideButton>
            <SideToggle aria-label="Hide side panel"><MdChevronRight size={16} color="#333" /></SideToggle>
          </SidePanel>
        </Workspace>
        <WindowsTaskbar />
      </Page>
    </>
  );
}

export default App;
